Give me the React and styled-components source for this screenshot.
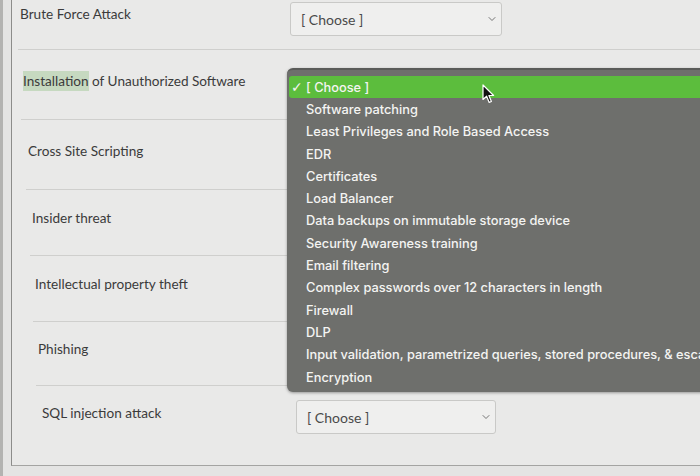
import React from "react";
import styled, { createGlobalStyle } from "styled-components";
import { ChevronDown } from "lucide-react";

const GlobalStyle = createGlobalStyle`
  html, body {
    margin: 0;
    padding: 0;
    background: #e4e4e3;
    overflow: hidden;
  }
`;

const rows = [
  { label: "Brute Force Attack", indent: 20, h: 62, lift: 5 },
  { label: "Installation of Unauthorized Software", indent: 23, h: 70, lift: 0, open: true },
  { label: "Cross Site Scripting", indent: 28, h: 70, lift: 0 },
  { label: "Insider threat", indent: 32, h: 66, lift: 3 },
  { label: "Intellectual property theft", indent: 35, h: 66, lift: 3 },
  { label: "Phishing", indent: 38, h: 64, lift: 4 },
  { label: "SQL injection attack", indent: 42, h: 80, lift: 4, last: true },
];

const options = [
  "Software patching",
  "Least Privileges and Role Based Access",
  "EDR",
  "Certificates",
  "Load Balancer",
  "Data backups on immutable storage device",
  "Security Awareness training",
  "Email filtering",
  "Complex passwords over 12 characters in length",
  "Firewall",
  "DLP",
  "Input validation, parametrized queries, stored procedures, & escaping",
  "Encryption",
];

const Cursor = () => (
  <CursorWrap>
    <svg width="13" height="20" viewBox="0 0 13 20">
      <path
        d="M1 1 L1 15.5 L4.6 12.2 L7.2 18.4 L9.4 17.5 L6.9 11.5 L11.6 11.5 Z"
        fill="#111"
        stroke="#fff"
        strokeWidth="1.2"
        strokeLinejoin="round"
      />
    </svg>
  </CursorWrap>
);

const App = () => {
  return (
    <Page>
      <GlobalStyle />
      <Card>
        {rows.map((row, index) => (
          <Row key={index} $indent={row.indent} $h={row.h} $last={row.last}>
            <Label $lift={row.lift}>
              {row.open ? (
                <>
                  <Mark>Installation</Mark> of Unauthorized Software
                </>
              ) : (
                row.label
              )}
            </Label>
            <Control>
              {!row.open && (
                <Select $shift={row.last ? 6 : 0} $w={row.last ? 200 : 212}>
                  <span>[ Choose ]</span>
                  <ChevronDown size={12} strokeWidth={1.8} color="#666" />
                </Select>
              )}
              {row.open && (
                <Menu>
                  <Item $active>
                    <Check>✓</Check>[ Choose ]
                  </Item>
                  {options.map((opt, i) => (
                    <Item key={i}>
                      <Check />
                      {opt}
                    </Item>
                  ))}
                  <Cursor />
                </Menu>
              )}
            </Control>
          </Row>
        ))}
      </Card>
    </Page>
  );
};

export default App;

const Page = styled.div`
  width: 700px;
  height: 476px;
  overflow: hidden;
  background: #e4e4e3;
  border-left: 3px solid #b3b3b1;
  box-sizing: border-box;
  font-family: Lato, "Open Sans", sans-serif;
`;

const Card = styled.div`
  margin-left: 8px;
  margin-top: -12px;
  height: 478px;
  box-sizing: border-box;
  border-left: 1px solid #8c8c8a;
  border-bottom: 1px solid #a4a4a2;
  background: #e9e9e8;
`;

const Row = styled.div`
  display: grid;
  grid-template-columns: ${(p) => 290 - p.$indent}px 212px;
  margin-left: ${(p) => p.$indent - 14}px;
  padding: 14px 0 0 2px;
  height: ${(p) => p.$h}px;
  box-sizing: border-box;
  border-bottom: ${(p) => (p.$last ? "none" : "1px solid #cfcfcd")};
  align-items: start;
`;

const Label = styled.div`
  line-height: 34px;
  font-size: 13.6px;
  color: #3b3b3b;
  margin-top: ${(p) => -p.$lift}px;
  white-space: nowrap;
`;

const Mark = styled.span`
  background: #c6d9c0;
  padding: 2px 0;
`;

const Control = styled.div`
  position: relative;
`;

const Select = styled.div`
  width: ${(p) => p.$w}px;
  height: 34px;
  margin-left: ${(p) => p.$shift}px;
  box-sizing: border-box;
  display: flex;
  align-items: center;
  justify-content: space-between;
  padding: 0 3px 0 10px;
  background: #efefee;
  border: 1px solid #c9c9c7;
  border-radius: 3px;
  font-size: 14px;
  color: #4a4a4a;
`;

const Menu = styled.div`
  position: absolute;
  top: 4px;
  left: -3px;
  width: 440px;
  box-sizing: border-box;
  padding: 6px 0 4px 2px;
  background: #6e6f6c;
  border-top: 2px solid #5a5b59;
  border-radius: 6px;
  box-shadow: 0 1px 3px rgba(0, 0, 0, 0.35);
  font-family: Inter, "Open Sans", sans-serif;
  z-index: 2;
`;

const Item = styled.div`
  display: flex;
  align-items: center;
  height: 22.3px;
  padding-left: 2px;
  white-space: nowrap;
  font-size: 12.8px;
  font-weight: 500;
  color: #f4f4f2;
  background: ${(p) => (p.$active ? "#5cbd3d" : "transparent")};
  border-radius: ${(p) => (p.$active ? "3px 0 0 3px" : "0")};
`;

const Check = styled.span`
  display: inline-block;
  flex: none;
  width: 15px;
  font-size: 14px;
  font-family: "DejaVu Sans", sans-serif;
`;

const CursorWrap = styled.div`
  position: absolute;
  top: 14px;
  left: 195px;
`;
